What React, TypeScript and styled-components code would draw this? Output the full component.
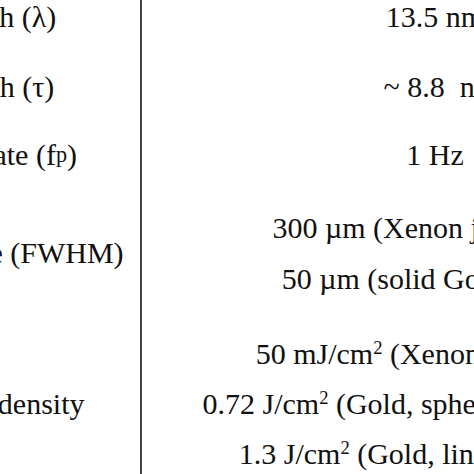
import React from "react";
import styled, { createGlobalStyle } from "styled-components";

const GlobalStyle = createGlobalStyle`
  html,
  body {
    margin: 0;
    background: #fff;
    overflow: hidden;
  }
  body {
    font-family: "Liberation Serif", "Times New Roman", serif;
    color: #111;
  }
`;

const Table = styled.div`
  display: flex;
  flex-direction: column;
  width: max-content;
  margin-left: -212px;
  margin-top: -18px;
  font-size: 30px;
`;

const Row = styled.div`
  display: grid;
  grid-template-columns: 352px 588px;
`;

const Label = styled.div<{ $pad: number }>`
  display: flex;
  align-items: center;
  justify-content: center;
  padding-top: ${(p) => p.$pad}px;
  white-space: nowrap;
  line-height: 50px;
`;

const Value = styled.div<{ $pad: number }>`
  display: flex;
  flex-direction: column;
  align-items: center;
  padding-top: ${(p) => p.$pad}px;
  border-left: 2px solid #444;
`;

const Line = styled.div<{ $h?: number }>`
  line-height: ${(p) => p.$h ?? 50}px;
  white-space: nowrap;
`;

const Sub = styled.sub`
  font-size: 0.74em;
  vertical-align: -0.32em;
  line-height: 0;
`;

const Sup = styled.sup`
  font-size: 0.62em;
  vertical-align: 0.55em;
  line-height: 0;
`;

type Param = { pad: number; h?: number; label: React.ReactNode; values: React.ReactNode[] };

const params: Param[] = [
  { pad: 10, label: "Wavelength (λ)", values: ["13.5 nm"] },
  { pad: 20, label: "Pulse width (τ)", values: ["~ 8.8\u2002ns"] },
  {
    pad: 18,
    label: (
      <>
        Repetition rate (f<Sub>p</Sub>)
      </>
    ),
    values: ["1 Hz"],
  },
  {
    pad: 22,
    h: 51,
    label: "Plasma spot size (FWHM)",
    values: ["300 µm (Xenon jet targets)", "50 µm (solid Gold target)"],
  },
  {
    pad: 25,
    h: 50,
    label: "Peak energy density",
    values: [
      <>
        50 mJ/cm<Sup>2</Sup> (Xenon jet targets)
      </>,
      <>
        0.72 J/cm<Sup>2</Sup> (Gold, spherical lens focus)
      </>,
      <>
        1.3 J/cm<Sup>2</Sup> (Gold, linear focusing)
      </>,
    ],
  },
];

export default function App() {
  return (
    <>
      <GlobalStyle />
      <Table>
        {params.map((p, i) => (
          <Row key={i}>
            <Label $pad={p.pad}>{p.label}</Label>
            <Value $pad={p.pad}>
              {p.values.map((v, j) => (
                <Line key={j} $h={p.h}>
                  {v}
                </Line>
              ))}
            </Value>
          </Row>
        ))}
      </Table>
    </>
  );
}
